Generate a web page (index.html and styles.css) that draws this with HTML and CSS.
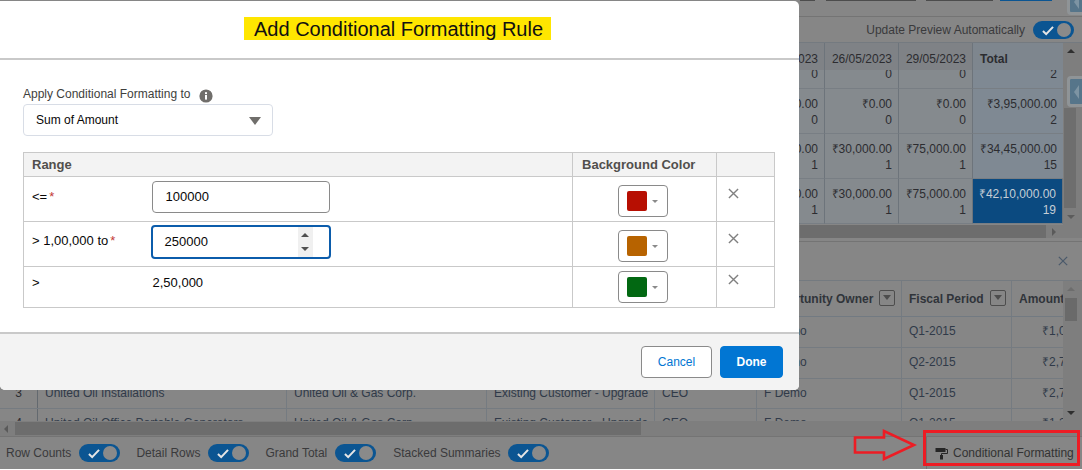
FILE: index.html
```html
<!DOCTYPE html>
<html lang="en">
<head>
<meta charset="utf-8">
<title>Add Conditional Formatting Rule</title>
<link rel="stylesheet" href="styles.css">
</head>
<body>
<svg class="defs" width="0" height="0" aria-hidden="true">
  <symbol id="chk" viewBox="0 0 14 12"><path d="M1.5 6.5 5 10 12.5 2" fill="none" stroke="currentColor" stroke-width="2.2"/></symbol>
  <symbol id="cross" viewBox="0 0 12 12"><path d="M1 1 11 11M11 1 1 11" fill="none" stroke="currentColor" stroke-width="1.5"/></symbol>
</svg>
<div class="page">
  <div class="topbar">
    <span class="topbtn topbtn-a"></span><span class="topbtn topbtn-b"></span><span class="topbtn topbtn-c"></span><span class="topbtn topbtn-d"></span>
  </div>
  <div class="toolbar">
    <span>Update Preview Automatically</span>
    <span class="toggle"><svg class="tick"><use href="#chk"/></svg><i class="knob"></i></span>
  </div>
  <div class="pivot">
    <div class="pivot-main">
      <div class="pv-row pv-head">
        <div class="pv"></div><div class="pv">25/05/2023</div><div class="pv">26/05/2023</div><div class="pv">29/05/2023</div><div class="pv pv-total"><b>Total</b></div>
      </div>
      <div class="pv-row pv-first">
        <div class="pv"></div><div class="pv">0</div><div class="pv">0</div><div class="pv">0</div><div class="pv pv-total">2</div>
      </div>
      <div class="pv-row">
        <div class="pv"></div><div class="pv">₹0.00<br>0</div><div class="pv">₹0.00<br>0</div><div class="pv">₹0.00<br>0</div><div class="pv pv-total">₹3,95,000.00<br>2</div>
      </div>
      <div class="pv-row">
        <div class="pv"></div><div class="pv">₹30,000.00<br>1</div><div class="pv">₹30,000.00<br>1</div><div class="pv">₹75,000.00<br>1</div><div class="pv pv-total">₹34,45,000.00<br>15</div>
      </div>
      <div class="pv-row">
        <div class="pv"></div><div class="pv">₹30,000.00<br>1</div><div class="pv">₹30,000.00<br>1</div><div class="pv">₹75,000.00<br>1</div><div class="pv pv-grand">₹42,10,000.00<br>19</div>
      </div>
    </div>
    <div class="vscroll vscroll-top">
      <i class="arrow-up"></i><i class="vthumb vthumb-top"></i><i class="arrow-down arrow-faint"></i>
    </div>
  </div>
  <div class="hscroll hscroll-top"><i class="hthumb hthumb-top"></i><i class="arrow-right"></i></div>
  <div class="panel-head"><svg class="panel-x"><use href="#cross"/></svg></div>
  <div class="detail">
    <div class="detail-main">
      <div class="dt-row dt-head">
        <div class="dt dt-num"></div><div class="dt">Opportunity Name</div><div class="dt">Account Name</div><div class="dt">Type</div><div class="dt">Title</div>
        <div class="dt">Opportunity Owner<i class="filter"></i></div>
        <div class="dt">Fiscal Period<i class="filter filter-fiscal"></i></div>
        <div class="dt dt-amount">Amount</div>
      </div>
      <div class="dt-row dt-body">
        <div class="dt dt-num">1</div><div class="dt">United Oil Refinery Generators</div><div class="dt">United Oil &amp; Gas Corp.</div><div class="dt">Existing Customer - Upgrade</div><div class="dt">CEO</div><div class="dt">F Demo</div><div class="dt dt-q">Q1-2015</div><div class="dt dt-amt">₹1,00,000.00</div>
      </div>
      <div class="dt-row dt-body">
        <div class="dt dt-num">2</div><div class="dt">United Oil Emergency Generators</div><div class="dt">United Oil &amp; Gas Corp.</div><div class="dt">Existing Customer - Upgrade</div><div class="dt">CEO</div><div class="dt">F Demo</div><div class="dt dt-q">Q2-2015</div><div class="dt dt-amt">₹2,70,000.00</div>
      </div>
      <div class="dt-row dt-body dt-short">
        <div class="dt dt-num">3</div><div class="dt">United Oil Installations</div><div class="dt">United Oil &amp; Gas Corp.</div><div class="dt">Existing Customer - Upgrade</div><div class="dt">CEO</div><div class="dt">F Demo</div><div class="dt dt-q">Q1-2015</div><div class="dt dt-amt">₹2,70,000.00</div>
      </div>
      <div class="dt-row dt-body">
        <div class="dt dt-num">4</div><div class="dt">United Oil Office Portable Generators</div><div class="dt">United Oil &amp; Gas Corp.</div><div class="dt">Existing Customer - Upgrade</div><div class="dt">CEO</div><div class="dt">F Demo</div><div class="dt dt-q">Q1-2015</div><div class="dt dt-amt">₹1,20,000.00</div>
      </div>
    </div>
    <div class="vscroll vscroll-detail">
      <i class="arrow-up arrow-faint"></i><i class="vthumb vthumb-detail"></i><i class="arrow-down"></i>
    </div>
  </div>
  <div class="hscroll hscroll-detail"><i class="arrow-left"></i><i class="hthumb hthumb-detail"></i></div>
  <div class="footer">
    <span class="foot-item foot-row">Row Counts<span class="toggle"><svg class="tick"><use href="#chk"/></svg><i class="knob"></i></span></span>
    <span class="foot-item foot-detail">Detail Rows<span class="toggle"><svg class="tick"><use href="#chk"/></svg><i class="knob"></i></span></span>
    <span class="foot-item foot-grand">Grand Total<span class="toggle"><svg class="tick"><use href="#chk"/></svg><i class="knob"></i></span></span>
    <span class="foot-item foot-stack">Stacked Summaries<span class="toggle"><svg class="tick"><use href="#chk"/></svg><i class="knob"></i></span></span>
    <span class="cf-btn">
      <svg class="roller" viewBox="0 0 13 13"><path d="M0.5 1H10.5V5H0.5Z" fill="#262626"/><path d="M10.5 2.5H12.5V6.5H6.5V8" fill="none" stroke="#262626" stroke-width="1"/><path d="M5 8H8V12.5H5Z" fill="#262626"/></svg>
      Conditional Formatting
    </span>
  </div>

  <i class="side-tab side-tab-top"></i>
  <i class="side-tab side-tab-mid"></i>

  <section class="modal">
    <header class="modal-head"><h1 class="modal-title">Add Conditional Formatting Rule</h1></header>
    <div class="modal-body">
      <div class="field-label">Apply Conditional Formatting to
        <svg class="info" viewBox="0 0 14 14"><circle cx="7" cy="7" r="6.6" fill="#706e6b"/><rect x="6" y="6" width="2" height="4.6" fill="#fff"/><rect x="6" y="3.2" width="2" height="1.9" fill="#fff"/></svg>
      </div>
      <div class="select">Sum of Amount<i class="select-caret"></i></div>
      <table class="rules">
        <colgroup><col class="c-label"><col class="c-value"><col class="c-color"><col class="c-del"></colgroup>
        <thead>
          <tr><th colspan="2">Range</th><th>Background Color</th><th></th></tr>
        </thead>
        <tbody>
          <tr class="r1">
            <td class="lbl">&lt;=<span class="req">*</span></td>
            <td class="val"><div class="num">100000</div></td>
            <td class="clr"><div class="swatch-btn"><i class="swatch sw-red"></i><i class="mini-caret"></i></div></td>
            <td class="del"><svg class="x"><use href="#cross"/></svg></td>
          </tr>
          <tr class="r2">
            <td class="lbl">&gt; 1,00,000 to<span class="req">*</span></td>
            <td class="val"><div class="num num-focus">250000<span class="spin"><i class="spin-up"></i><i class="spin-down"></i></span></div></td>
            <td class="clr"><div class="swatch-btn"><i class="swatch sw-orange"></i><i class="mini-caret"></i></div></td>
            <td class="del"><svg class="x"><use href="#cross"/></svg></td>
          </tr>
          <tr class="r3">
            <td class="lbl">&gt;</td>
            <td class="val">2,50,000</td>
            <td class="clr"><div class="swatch-btn"><i class="swatch sw-green"></i><i class="mini-caret"></i></div></td>
            <td class="del"><svg class="x"><use href="#cross"/></svg></td>
          </tr>
        </tbody>
      </table>
    </div>
    <footer class="modal-foot">
      <button class="btn btn-cancel" type="button">Cancel</button>
      <button class="btn btn-done" type="button">Done</button>
    </footer>
  </section>

  <svg class="callout-arrow" viewBox="0 0 64 32"><path d="M2 8.500H31V2L61 16 31 30V23.500H2Z" fill="none" stroke="#ed1c24" stroke-width="2.600"/></svg>
  <div class="callout-box"></div>
</div>
</body>
</html>
```

FILE: styles.css
```css
* { box-sizing: border-box; }
html, body { margin: 0; padding: 0; background: #fff; }
body { font: 12px/16px "Liberation Sans", Arial, sans-serif; color: #2c2c30; }
i { display: block; }
.defs { position: absolute; }

.page {
  position: relative;
  width: 1082px;
  height: 469px;
  background: #868686;
  overflow: hidden;
  display: flex;
  flex-direction: column;
}

/* backdrop page */
.topbar { height: 17px; flex: none; border-bottom: 1px solid #747474; display: flex; padding-left: 800px; }
.topbtn { height: 1px; background: #4c4c4c; }
.topbtn-a { width: 15px; }
.topbtn-b { width: 90px; margin-left: 11px; }
.topbtn-c { width: 67px; margin-left: 10px; }
.topbtn-d { width: 52px; margin-left: 7px; background: #0b5592; }
.toolbar { height: 26px; flex: none; display: flex; align-items: center; justify-content: flex-end; gap: 8px; padding-right: 8px; border-bottom: 1px solid #747a80; color: #3a3a3c; }

.toggle {
  position: relative;
  display: inline-block;
  flex: none;
  width: 41px;
  height: 18px;
  border-radius: 9px;
  background: #0b5592;
}
.tick { position: absolute; left: 8px; top: 4px; width: 14px; height: 11px; color: #e6e6e6; }
.knob { position: absolute; right: 3px; top: 2px; width: 14px; height: 14px; border-radius: 50%; background: #8a8a8a; }

.pivot { display: flex; flex: none; height: 182px; }
.pivot-main { width: 1063px; flex: none; }
.pv-row { display: grid; grid-template-columns: 751px 74px 74px 74px 90px; height: 45px; }
.pv {
  background: #858a8e;
  border-right: 1px solid #6d747b;
  border-bottom: 1px solid #787e84;
  text-align: right;
  padding: 7px 6px 0 0;
}
.pv-head { height: 27px; }
.pv-head .pv { background: #7f8286; border-bottom: 0; padding: 8px 6px 0 0; overflow: hidden; white-space: nowrap; }
.pv-head .pv:last-child { background: #7e868e; text-align: left; padding-left: 7px; border-right: 0; }
.pv-first { height: 19px; overflow: hidden; }
.pv-first .pv { padding: 0 6px 0 0; margin-top: -4px; height: 23px; }
.pv-total { background: #7f8993; border-right: 0; }
.pv-grand { background: #0b4a80; color: #c5ced6; text-align: right; padding: 7px 6px 0 0; }

.vscroll { position: relative; flex: 1; background: #7e7e7e; }
.vthumb { position: absolute; background: #6e6e6e; }
.vthumb-top { left: 1px; right: 6px; top: 65px; height: 100px; }
.vthumb-detail { left: 2px; right: 5px; top: 17px; height: 23px; background: #6a6a6a; }
.arrow-up, .arrow-down { position: absolute; left: 4px; width: 0; height: 0; border-left: 4px solid transparent; border-right: 4px solid transparent; }
.arrow-up { top: 6px; border-bottom: 4px solid #2f2f2f; }
.arrow-down { bottom: 6px; border-top: 4px solid #2f2f2f; }
.arrow-faint { border-top-color: #5c5c5c; border-bottom-color: #5c5c5c; }
.vscroll-detail .arrow-up { border-bottom-color: #6d6d6d; }

.hscroll { position: relative; flex: none; background: #7e7e7e; }
.hscroll-top { height: 13px; }
.hthumb { position: absolute; background: #6d6d6d; top: 0; bottom: 0; }
.hthumb-top { left: 800px; width: 246px; }
.arrow-right { position: absolute; left: 1052px; top: 3px; width: 0; height: 0; border-top: 4px solid transparent; border-bottom: 4px solid transparent; border-left: 4px solid #5a5a5a; }
.arrow-left { position: absolute; left: 4px; top: 4px; width: 0; height: 0; border-top: 4px solid transparent; border-bottom: 4px solid transparent; border-right: 4px solid #5a5a5a; }

.panel-head { flex: none; height: 40px; margin-top: 3px; display: flex; justify-content: flex-end; align-items: center; border-top: 1px solid #747474; border-bottom: 1px solid #747a80; padding-right: 14px; }
.panel-x { width: 10px; height: 10px; color: #4b5a6b; }

.detail { display: flex; flex: none; height: 140px; }
.detail-main { width: 1063px; flex: none; overflow: hidden; }
.dt-row { display: grid; grid-template-columns: 38px 249px 200px 168px 102px 145px 110px 100px; height: 31px; border-bottom: 1px solid #757b81; }
.dt { padding: 6px 0 0 7px; white-space: nowrap; overflow: hidden; border-right: 1px solid #757b81; color: #303a49; }
.dt-num { text-align: center; padding-left: 0; border-right-color: #63696f; color: #2c2c30; }
.dt-head { height: 36px; border-bottom: 1px solid #727a82; }
.dt-head .dt { position: relative; padding-top: 10px; font-weight: 700; color: #30343a; }
.dt-short { height: 30px; }
.dt-amt { padding-left: 30px; }
.dt-amount { border-right: 0; }
.filter { position: absolute; right: 6px; top: 9px; width: 16px; height: 16px; border: 1px solid #4d4d4d; border-radius: 2px; }
.filter::after { content: ""; position: absolute; left: 3px; top: 4px; border-left: 4px solid transparent; border-right: 4px solid transparent; border-top: 5px solid #4d4d4d; }
.filter-fiscal { right: 5px; }

.hscroll-detail { height: 16px; border-bottom: 1px solid #747474; }
.hthumb-detail { left: 15px; width: 626px; bottom: 1px; top: 1px; }

.footer { flex: 1; display: flex; align-items: center; color: #3a3a3c; padding-left: 6px; }
.foot-item { display: inline-flex; align-items: center; gap: 8px; }
.foot-detail { margin-left: 16px; }
.foot-grand { margin-left: 16px; }
.foot-stack { margin-left: 17px; gap: 7px; }
.cf-btn { display: flex; align-items: center; gap: 5px; margin-left: auto; height: 100%; padding: 0 0 0 8px; width: 156px; border-left: 1px solid #707070; color: #333; white-space: nowrap; }
.roller { width: 13px; height: 13px; flex: none; }

.side-tab { position: absolute; right: 0; width: 15px; background: #56758a; border: 3px solid #8f9497; border-right: 0; border-radius: 4px 0 0 4px; }
.side-tab::after { content: ""; position: absolute; left: 4px; top: 50%; margin-top: -7px; border-top: 7px solid transparent; border-bottom: 7px solid transparent; border-right: 5px solid #7d94a3; }
.side-tab-top { top: -11px; height: 26px; }
.side-tab-mid { top: 76px; height: 31px; }

/* modal */
.modal {
  position: absolute;
  left: 0;
  top: 1px;
  width: 799px;
  height: 389px;
  background: #fff;
  border-radius: 0 5px 5px 5px;
  display: flex;
  flex-direction: column;
  overflow: hidden;
  color: #080707;
}
.modal-head { flex: none; height: 59px; border-bottom: 2px solid #c9c9c9; padding: 16px 0 0 244px; }
.modal-title { display: inline-block; margin: 0; background: #ffe600; padding: 0 8px 0 10px; height: 23px; font-size: 20px; line-height: 24px; font-weight: 400; color: #111; white-space: nowrap; }
.modal-body { flex: 1; padding: 27px 23px 0; }
.field-label { height: 17px; color: #3e3e3c; line-height: 14px; position: relative; }
.info { position: absolute; left: 176px; top: 2px; width: 14px; height: 14px; }
.select { position: relative; width: 250px; height: 32px; border: 1px solid #d8dde6; border-radius: 4px; padding: 7px 0 0 12px; color: #080707; }
.select-caret { position: absolute; right: 11px; top: 12px; border-left: 6px solid transparent; border-right: 6px solid transparent; border-top: 8px solid #706e6b; }

.rules { margin-top: 16px; width: 751px; table-layout: fixed; border-collapse: collapse; font-size: 13px; }
.c-label { width: 128px; }
.c-value { width: 421px; }
.c-color { width: 144px; }
.c-del { width: 58px; }
.rules th, .rules td { border: 1px solid #c9c9c9; vertical-align: top; padding: 0; }
.rules th { height: 24px; background: #f3f3f3; text-align: left; padding: 4px 0 0 8px; color: #514f4d; font-weight: 700; font-size: 13px; }
.rules th + th { padding-left: 9px; }
.rules .lbl { border-right: 0; padding: 12px 0 0 8px; white-space: nowrap; }
.rules .val { border-left: 0; padding: 4px 0 0 0; }
.rules .clr { padding: 8px 0 0 45px; }
.rules .del { padding: 11px 0 0 11px; }
.r1 td { height: 45px; }
.r2 td { height: 45px; }
.r3 td { height: 41px; }
.rules .r2 .lbl { padding-top: 11px; }
.rules .r2 .val { padding-top: 3px; }
.rules .r3 .lbl { padding-top: 8px; }
.rules .r3 .val { padding: 8px 0 0 1px; }
.rules .r3 .clr { padding-top: 4px; }
.rules .r3 .del { padding-top: 7px; }
.req { color: #c23934; margin-left: 2px; }
.num { position: relative; width: 178px; height: 32px; border: 1px solid #8a8a8a; border-radius: 4px; padding: 7px 0 0 13px; }
.num-focus { width: 180px; height: 34px; margin-left: -1px; border: 2px solid #0b5cab; padding: 7px 0 0 12px; }
.spin { position: absolute; right: 16px; top: 0; width: 15px; height: 30px; background: #f0f0f0; }
.spin-up, .spin-down { position: absolute; left: 3px; border-left: 4px solid transparent; border-right: 4px solid transparent; }
.spin-up { top: 6px; border-bottom: 4px solid #505050; }
.spin-down { bottom: 6px; border-top: 4px solid #505050; }
.swatch-btn { position: relative; width: 50px; height: 32px; border: 1px solid #8a8a8a; border-radius: 4px; }
.swatch { position: absolute; left: 8px; top: 5px; width: 20px; height: 20px; border-radius: 2px; }
.sw-red { background: #b70f02; }
.sw-orange { background: #b76300; }
.sw-green { background: #026812; }
.mini-caret { position: absolute; left: 33px; top: 14px; border-left: 3px solid transparent; border-right: 3px solid transparent; border-top: 3px solid #8a8a8a; }
.x { display: block; width: 11px; height: 11px; color: #808080; }

.modal-foot { flex: none; height: 58px; background: #f3f3f3; border-top: 2px solid #c9c9c9; display: flex; justify-content: flex-end; gap: 8px; padding: 12px 16px 0 0; }
.btn { height: 32px; border-radius: 4px; font: 12px/16px "Liberation Sans", Arial, sans-serif; padding: 0; }
.btn-cancel { width: 71px; background: #fff; border: 1px solid #8a8a8a; color: #0176d3; }
.btn-done { width: 63px; background: #0176d3; border: 1px solid #0176d3; color: #fff; font-weight: 700; }

/* annotation */
.callout-arrow { position: absolute; left: 853px; top: 429px; width: 64px; height: 32px; }
.callout-box { position: absolute; left: 923px; top: 430px; width: 157px; height: 36px; border: 3px solid #ed1c24; }
```
